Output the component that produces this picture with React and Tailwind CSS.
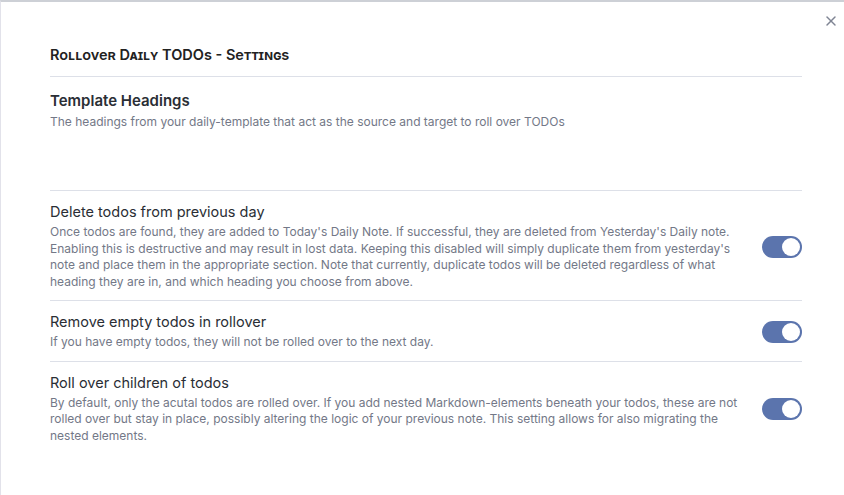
import { X } from "lucide-react";

const settings = [
  {
    name: "Delete todos from previous day",
    desc: "Once todos are found, they are added to Today's Daily Note. If successful, they are deleted from Yesterday's Daily note. Enabling this is destructive and may result in lost data. Keeping this disabled will simply duplicate them from yesterday's note and place them in the appropriate section. Note that currently, duplicate todos will be deleted regardless of what heading they are in, and which heading you choose from above.",
  },
  {
    name: "Remove empty todos in rollover",
    desc: "If you have empty todos, they will not be rolled over to the next day.",
  },
  {
    name: "Roll over children of todos",
    desc: "By default, only the acutal todos are rolled over. If you add nested Markdown-elements beneath your todos, these are not rolled over but stay in place, possibly altering the logic of your previous note. This setting allows for also migrating the nested elements.",
  },
];

function Toggle() {
  return (
    <div className="flex h-[22px] w-[40px] shrink-0 items-center justify-end rounded-full bg-[#5b74ad] px-[2px]">
      <div className="h-[18px] w-[18px] rounded-full bg-white" />
    </div>
  );
}

export default function App() {
  return (
    <div
      className="relative h-[495px] w-[844px] overflow-hidden border-t-2 border-l border-t-[#cdd0d6] border-l-[#e2e2ea] bg-white"
      style={{ fontFamily: "Inter, 'Noto Sans', sans-serif" }}
    >
      <button className="absolute right-[5px] top-[11px] text-[#7f8493]">
        <X size={16} strokeWidth={2.2} />
      </button>

      <div className="pl-[49px] pr-[42px] pt-[44px]">
        <h2 className="border-b border-[#dde0e8] pb-[12px] text-[14.5px] font-semibold leading-[18px] text-[#222] [font-variant:small-caps]">
          Rollover Daily TODOs - Settings
        </h2>

        <div className="h-[113px] pt-[15px]">
          <div className="text-[15px] font-semibold leading-[18px] text-[#2a2e35]">Template Headings</div>
          <div className="mt-[4px] text-[12px] leading-[16.5px] text-[#737887]">
            The headings from your daily-template that act as the source and target to roll over TODOs
          </div>
        </div>

        {settings.map((s) => (
          <div key={s.name} className="flex items-center gap-[22px] border-t border-[#dde0e8] pb-[10px] pt-[12px]">
            <div className="flex-1">
              <div className="text-[14.5px] leading-[18px] text-[#2a2e35]">{s.name}</div>
              <div className="mt-[3px] text-[12px] leading-[16.5px] text-[#737887]">{s.desc}</div>
            </div>
            <Toggle />
          </div>
        ))}
      </div>
    </div>
  );
}
